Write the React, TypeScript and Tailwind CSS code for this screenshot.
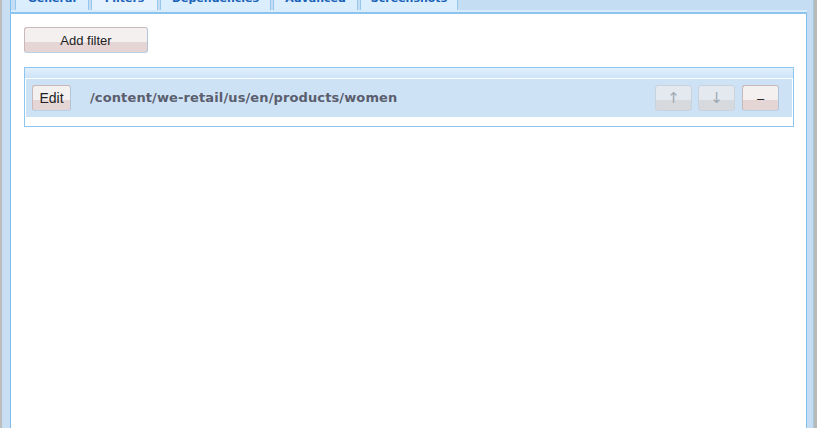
import React from 'react';

const tabs = [
  { label: 'General', w: 'w-[74px]', active: false },
  { label: 'Filters', w: 'w-[67px]', active: true },
  { label: 'Dependencies', w: 'w-[111px]', active: false },
  { label: 'Advanced', w: 'w-[85px]', active: false },
  { label: 'Screenshots', w: 'w-[98px]', active: false },
];

const font = { fontFamily: '"Liberation Sans", Arial, sans-serif' };

function PinkButton({ children, className }: { children: React.ReactNode; className: string }) {
  return (
    <button
      className={`flex items-center justify-center rounded-[3px] border border-[#cbb8b8] border-b-[#b9cfe6] border-r-[#b4c4d8] bg-[linear-gradient(#f4f0f0_58%,#e6d5d5_58%)] text-[13px] leading-none text-[#222] ${className}`}
      style={font}
    >
      {children}
    </button>
  );
}

function GrayButton({ children }: { children: React.ReactNode }) {
  return (
    <button
      className="w-[37px] h-[26px] flex items-center justify-center rounded-[3px] border border-[#c9d3de] bg-[linear-gradient(#e4e9ef_58%,#d6d9de_58%)] text-[15px] leading-none text-[#a0a8b2]"
      style={{ fontFamily: '"DejaVu Sans", sans-serif' }}
    >
      {children}
    </button>
  );
}

export default function App() {
  return (
    <div className="w-[817px] h-[428px] flex overflow-hidden bg-[#c5ddf3]">
      <div className="w-[2px] bg-[#bdbdbd]" />
      <div className="w-[8px] bg-[#c8def3]" />
      <div className="w-[797px] flex flex-col">
        {/* tab strip, labels clipped by the top of the window */}
        <div className="h-[10px] flex pl-[4px] gap-[2px] overflow-hidden bg-[#c5ddf3] border-l border-[#7fbfef]">
          {tabs.map((t) => (
            <div
              key={t.label}
              className={`${t.w} h-[22px] -mt-[12px] shrink-0 flex justify-center border-x border-[#96c8ef] ${
                t.active ? 'bg-[#e6f3fe]' : 'bg-[#dbeefd]'
              }`}
            >
              <span
                className="pt-[5px] leading-[12px] text-[11px] font-bold text-[#1a62b8]"
                style={{ fontFamily: '"DejaVu Sans", Verdana, sans-serif' }}
              >
                {t.label}
              </span>
            </div>
          ))}
        </div>
        <div className="h-[2px] bg-[#d8ecfc] border-l border-[#7fbfef]" />
        <div className="h-[2px] bg-[#8cc4ee]" />
        {/* content */}
        <div className="flex-1 bg-white border-x border-[#7fbfef] px-[13px] pt-[13px]">
          <PinkButton className="w-[124px] h-[26px]">Add filter</PinkButton>
          <div className="mt-[14px] w-[770px] h-[60px] border border-[#8fc6f0] flex flex-col">
            <div className="h-[10px] bg-gradient-to-b from-[#e2f0fc] to-[#cde3f8]" />
            <div className="h-[1px] bg-white" />
            <div className="mx-[1px] h-[38px] bg-[#cee2f6] flex items-center pl-[6px] pr-[13px]">
              <PinkButton className="w-[39px] h-[26px] text-[14px]">Edit</PinkButton>
              <span
                className="ml-[19px] text-[13px] font-bold tracking-[0.12px] text-[#5a5e6d]"
                style={{ fontFamily: '"DejaVu Sans", Verdana, sans-serif' }}
              >
                /content/we-retail/us/en/products/women
              </span>
              <div className="ml-auto flex items-center">
                <GrayButton>↑</GrayButton>
                <div className="w-[6px]" />
                <GrayButton>↓</GrayButton>
                <div className="w-[7px]" />
                <PinkButton className="w-[37px] h-[26px]">–</PinkButton>
              </div>
            </div>
          </div>
        </div>
      </div>
      <div className="w-[6px] bg-[#c5ddf3]" />
      <div className="w-[1px] bg-[#a9c6e0]" />
      <div className="w-[3px] bg-[#b7bab6]" />
    </div>
  );
}
